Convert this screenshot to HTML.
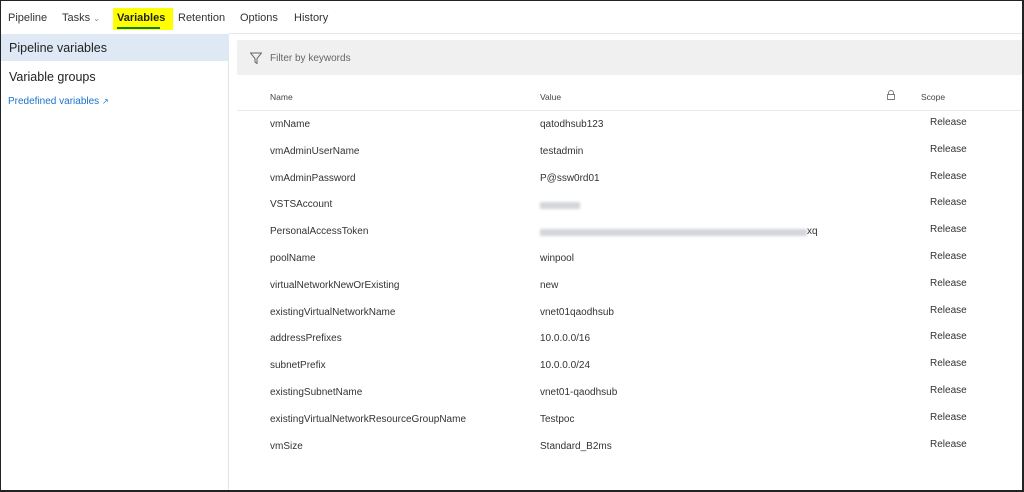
<!DOCTYPE html>
<html><head><meta charset="utf-8"><style>
*{margin:0;padding:0;box-sizing:border-box}
body{width:1024px;height:492px;overflow:hidden;background:#fff;font-family:"Liberation Sans",sans-serif;color:#333;position:relative}
.frame{position:absolute;left:0;top:0;width:1024px;height:492px;border:2px solid #222;border-left-width:1px;border-top-width:1px;pointer-events:none;z-index:5}
.t{position:absolute;white-space:nowrap}
.nav{font-size:11px;top:12px;color:#333}
.left{position:absolute;left:1px;top:34px;width:228px;height:456px;border-right:1px solid #e4e4e4}
.sel{position:absolute;left:0;top:0;width:228px;height:27px;background:#dfe9f5}
.filter{position:absolute;left:237px;top:40px;width:785px;height:35px;background:#f0f0f0;border-radius:2px}
.hline{position:absolute;height:1px;background:#eaeaea}
.c{font-size:10px;color:#333}
.h{font-size:8.5px;color:#444}
.blur{position:absolute;height:7px;background:#c9ccd4;filter:blur(1.2px);opacity:.8}
</style></head><body>
<div class="frame"></div>
<div class="t nav" style="left:8px">Pipeline</div>
<div class="t nav" style="left:62px">Tasks <span style="font-size:8px;color:#888">&#8964;</span></div>
<div style="position:absolute;left:113px;top:8px;width:60px;height:22px;background:#ffff00"></div>
<div class="t nav" style="left:117px;font-weight:bold;color:#222">Variables</div>
<div style="position:absolute;left:117px;top:27px;width:43px;height:2px;background:#107c10"></div>
<div class="t nav" style="left:178px">Retention</div>
<div class="t nav" style="left:240px">Options</div>
<div class="t nav" style="left:294px">History</div>
<div class="hline" style="left:229px;top:33px;width:794px;background:#e6e6e6"></div>
<div class="left"><div class="sel"></div></div>
<div class="t" style="left:9px;top:41px;font-size:12.5px;color:#222">Pipeline variables</div>
<div class="t" style="left:9px;top:70px;font-size:12.5px;color:#222">Variable groups</div>
<div class="t" style="left:8px;top:96px;font-size:10px;color:#1a73c9">Predefined variables <span style="font-size:8px">&#x2197;</span></div>
<div class="filter"></div>
<svg style="position:absolute;left:250px;top:52px" width="12" height="12" viewBox="0 0 12 12"><path d="M0.5 1h11L7 6.5V11.5L5 10V6.5z" fill="none" stroke="#666" stroke-width="1"/></svg>
<div class="t" style="left:270px;top:53px;font-size:10px;color:#666">Filter by keywords</div>
<div class="t h" style="left:270px;top:92px">Name</div>
<div class="t h" style="left:540px;top:92px">Value</div>
<svg style="position:absolute;left:887px;top:90px" width="8" height="10" viewBox="0 0 8 10"><path d="M1.5 4.5V3a2.5 2.5 0 0 1 5 0v1.5M0.5 4.5h7v5h-7z" fill="none" stroke="#777" stroke-width="0.9"/></svg>
<div class="t h" style="left:921px;top:92px">Scope</div>
<div class="hline" style="left:237px;top:110px;width:785px"></div>
<div class="t c" style="left:270px;top:119px">vmName</div><div class="t c" style="left:540px;top:119px">qatodhsub123</div><div class="t c" style="left:930px;top:117px">Release</div>
<div class="t c" style="left:270px;top:146px">vmAdminUserName</div><div class="t c" style="left:540px;top:146px">testadmin</div><div class="t c" style="left:930px;top:144px">Release</div>
<div class="t c" style="left:270px;top:173px">vmAdminPassword</div><div class="t c" style="left:540px;top:173px">P@ssw0rd01</div><div class="t c" style="left:930px;top:171px">Release</div>
<div class="t c" style="left:270px;top:199px">VSTSAccount</div><div class="blur" style="left:540px;top:202px;width:40px"></div><div class="t c" style="left:930px;top:197px">Release</div>
<div class="t c" style="left:270px;top:226px">PersonalAccessToken</div><div class="blur" style="left:540px;top:229px;width:267px"></div><div class="t c" style="left:807px;top:226px">xq</div><div class="t c" style="left:930px;top:224px">Release</div>
<div class="t c" style="left:270px;top:253px">poolName</div><div class="t c" style="left:540px;top:253px">winpool</div><div class="t c" style="left:930px;top:251px">Release</div>
<div class="t c" style="left:270px;top:280px">virtualNetworkNewOrExisting</div><div class="t c" style="left:540px;top:280px">new</div><div class="t c" style="left:930px;top:278px">Release</div>
<div class="t c" style="left:270px;top:307px">existingVirtualNetworkName</div><div class="t c" style="left:540px;top:307px">vnet01qaodhsub</div><div class="t c" style="left:930px;top:305px">Release</div>
<div class="t c" style="left:270px;top:333px">addressPrefixes</div><div class="t c" style="left:540px;top:333px">10.0.0.0/16</div><div class="t c" style="left:930px;top:331px">Release</div>
<div class="t c" style="left:270px;top:360px">subnetPrefix</div><div class="t c" style="left:540px;top:360px">10.0.0.0/24</div><div class="t c" style="left:930px;top:358px">Release</div>
<div class="t c" style="left:270px;top:387px">existingSubnetName</div><div class="t c" style="left:540px;top:387px">vnet01-qaodhsub</div><div class="t c" style="left:930px;top:385px">Release</div>
<div class="t c" style="left:270px;top:414px">existingVirtualNetworkResourceGroupName</div><div class="t c" style="left:540px;top:414px">Testpoc</div><div class="t c" style="left:930px;top:412px">Release</div>
<div class="t c" style="left:270px;top:441px">vmSize</div><div class="t c" style="left:540px;top:441px">Standard_B2ms</div><div class="t c" style="left:930px;top:439px">Release</div>
</body></html>
